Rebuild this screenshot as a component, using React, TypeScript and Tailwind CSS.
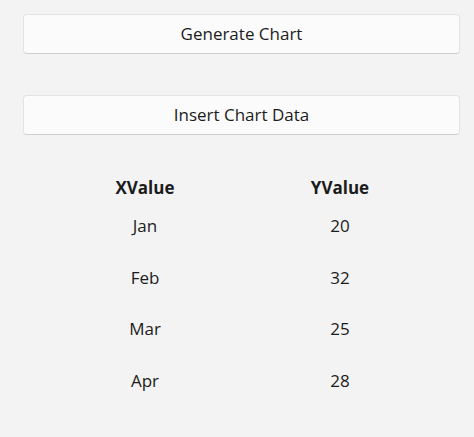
import React from 'react'

const rows = [
  { x: 'Jan', y: 20 },
  { x: 'Feb', y: 32 },
  { x: 'Mar', y: 25 },
  { x: 'Apr', y: 28 },
]

function ActionButton({ label }: { label: string }) {
  return (
    <button className="h-[40px] w-full rounded-[4px] border border-[#e3e3e3] border-b-[#cfcfcf] bg-[#fbfbfb] text-[17px] text-[#1b1b1b]">
      {label}
    </button>
  )
}

export default function App() {
  return (
    <div
      className="h-[437px] w-[474px] bg-[#f3f3f3] pl-[23px] pr-[14px] pt-[14px]"
      style={{ fontFamily: '"Open Sans", "Noto Sans", sans-serif' }}
    >
      <ActionButton label="Generate Chart" />
      <div className="mt-[41px]">
        <ActionButton label="Insert Chart Data" />
      </div>

      <div className="mt-[38px] grid grid-cols-[244px_146px] text-[17px] text-[#1b1b1b]">
        <div className="h-[30px] text-center text-[17px] font-bold leading-[30px]">XValue</div>
        <div className="h-[30px] text-center text-[17px] font-bold leading-[30px]">YValue</div>
        {rows.map((r) => (
          <React.Fragment key={r.x}>
            <div className="mt-[5px] h-[46.6px] text-center leading-[36px]">{r.x}</div>
            <div className="mt-[5px] h-[46.6px] text-center leading-[36px]">{r.y}</div>
          </React.Fragment>
        ))}
      </div>
    </div>
  )
}
